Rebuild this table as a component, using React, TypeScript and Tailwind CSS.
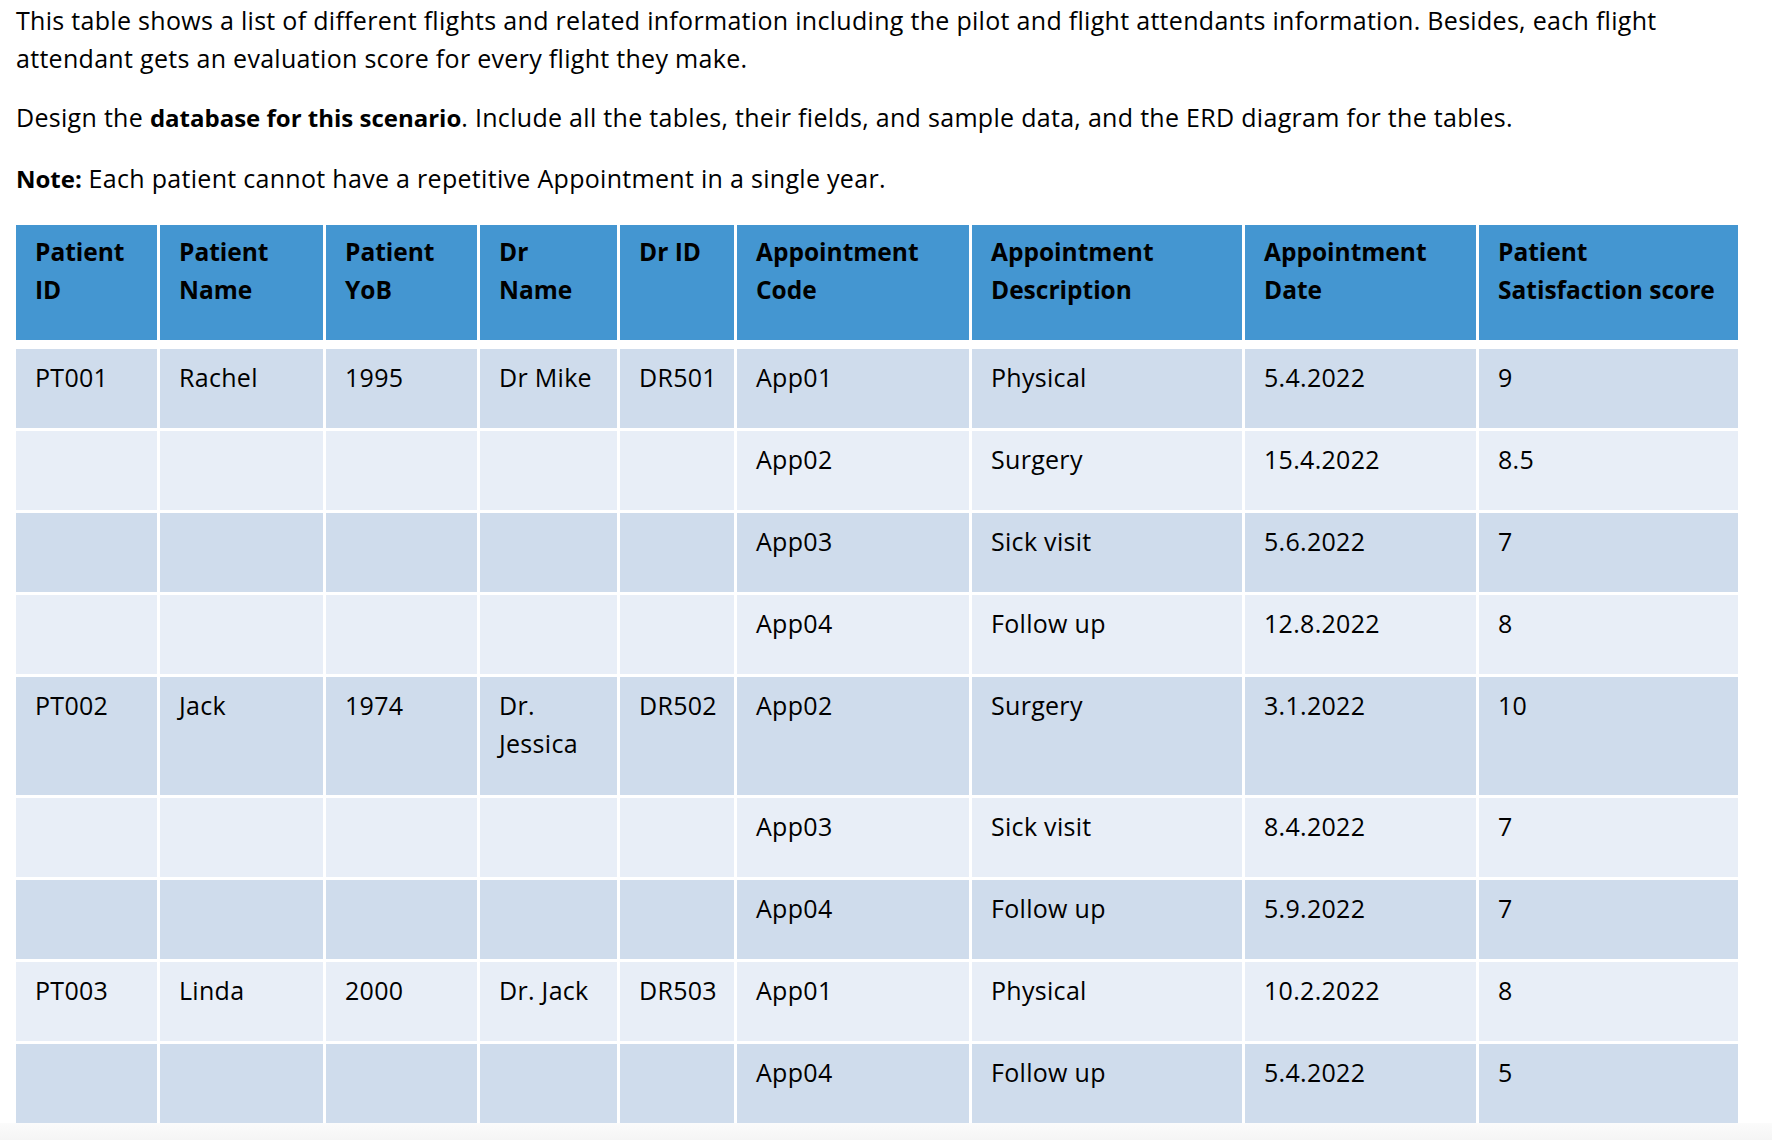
const headers = [
  ["Patient", "ID"],
  ["Patient", "Name"],
  ["Patient", "YoB"],
  ["Dr", "Name"],
  ["Dr ID"],
  ["Appointment", "Code"],
  ["Appointment", "Description"],
  ["Appointment", "Date"],
  ["Patient", "Satisfaction score"],
];

const rows: string[][][] = [
  [["PT001"], ["Rachel"], ["1995"], ["Dr Mike"], ["DR501"], ["App01"], ["Physical"], ["5.4.2022"], ["9"]],
  [[], [], [], [], [], ["App02"], ["Surgery"], ["15.4.2022"], ["8.5"]],
  [[], [], [], [], [], ["App03"], ["Sick visit"], ["5.6.2022"], ["7"]],
  [[], [], [], [], [], ["App04"], ["Follow up"], ["12.8.2022"], ["8"]],
  [["PT002"], ["Jack"], ["1974"], ["Dr.", "Jessica"], ["DR502"], ["App02"], ["Surgery"], ["3.1.2022"], ["10"]],
  [[], [], [], [], [], ["App03"], ["Sick visit"], ["8.4.2022"], ["7"]],
  [[], [], [], [], [], ["App04"], ["Follow up"], ["5.9.2022"], ["7"]],
  [["PT003"], ["Linda"], ["2000"], ["Dr. Jack"], ["DR503"], ["App01"], ["Physical"], ["10.2.2022"], ["8"]],
  [[], [], [], [], [], ["App04"], ["Follow up"], ["5.4.2022"], ["5"]],
];

const cols = "grid grid-cols-[141px_163px_151px_137px_114px_232px_270px_231px_259px] gap-x-[3px]";

export default function App() {
  return (
    <div className="min-h-screen bg-white font-['Open_Sans',sans-serif] text-[25px] leading-[38px] tracking-[0.3px] text-black">
      <div className="px-4 pt-px">
        <p>
          This table shows a list of different flights and related information including the pilot and flight attendants information. Besides, each flight
          <br />
          attendant gets an evaluation score for every flight they make.
        </p>
        <p className="mt-[21px]">
          Design the <b className="text-[24px] tracking-normal">database for this scenario</b>. Include all the tables, their fields, and sample data, and the ERD diagram for the tables.
        </p>
        <p className="mt-[22px]">
          <b className="text-[24px] tracking-normal">Note:</b> Each patient cannot have a repetitive Appointment in a single year.
        </p>

        <div className="mt-[27px] w-[1722px]">
          <div className={`${cols} h-[115px] bg-white`}>
            {headers.map((h, i) => (
              <div key={i} className="bg-[#4496d1] pl-[19px] pt-[8px] text-[24.5px] font-bold tracking-normal whitespace-nowrap">
                {h.map((line) => (
                  <div key={line}>{line}</div>
                ))}
              </div>
            ))}
          </div>

          <div className="mt-[9px] flex flex-col gap-y-[3px]">
            {rows.map((row, r) => (
              <div
                key={r}
                className={`${cols} ${row[3].length > 1 ? "h-[118px]" : "h-[79px]"}`}
              >
                {row.map((cell, c) => (
                  <div
                    key={c}
                    className={`${r % 2 === 0 ? "bg-[#cfdcec]" : "bg-[#e8eef7]"} pl-[19px] pt-[9px] whitespace-nowrap`}
                  >
                    {cell.map((line) => (
                      <div key={line}>{line}</div>
                    ))}
                  </div>
                ))}
              </div>
            ))}
          </div>
        </div>
      </div>
      <div className="h-[20px] bg-gradient-to-b from-[#fbfbfb] to-[#f4f4f4]" />
    </div>
  );
}
